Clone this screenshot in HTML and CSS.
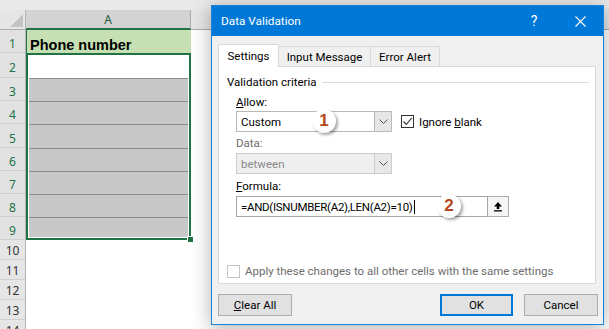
FILE: index.html
```html
<!DOCTYPE html>
<html>
<head>
<meta charset="utf-8">
<title>Data Validation</title>
<link rel="stylesheet" href="styles.css">
</head>
<body>
<div class="sheet">
  <div class="topstrip"></div>
  <div class="grid">
    <div class="rowheads">
      <div class="corner"><svg width="13" height="13" viewBox="0 0 13 13"><polygon points="13,0 13,13 0,13" fill="#c3c3c3"/></svg></div>
      <div class="rh sel r1">1</div>
      <div class="rh sel r2">2</div>
      <div class="rh sel">3</div>
      <div class="rh sel">4</div>
      <div class="rh sel r5">5</div>
      <div class="rh sel">6</div>
      <div class="rh sel">7</div>
      <div class="rh sel">8</div>
      <div class="rh sel">9</div>
      <div class="rh low">10</div>
      <div class="rh low">11</div>
      <div class="rh low">12</div>
      <div class="rh low">13</div>
      <div class="rh low">14</div>
    </div>
    <div class="colA">
      <div class="colhead">A</div>
      <div class="a1">Phone number</div>
      <div class="selection">
        <div class="cell active"></div>
        <div class="cell grey"></div>
        <div class="cell grey"></div>
        <div class="cell grey tall"></div>
        <div class="cell grey"></div>
        <div class="cell grey"></div>
        <div class="cell grey"></div>
        <div class="cell grey last"></div>
        <span class="handle"></span>
      </div>
    </div>
    <div class="colrest"><div class="resthead"></div></div>
  </div>
</div>

<div class="dialog">
  <div class="titlebar">
    <span class="title">Data Validation</span>
    <span class="tbtn help">?</span>
    <span class="tbtn close"><svg width="11" height="11" viewBox="0 0 11 11"><path d="M0.5 0.5 L10.5 10.5 M10.5 0.5 L0.5 10.5" stroke="#fff" stroke-width="1.1" fill="none"/></svg></span>
  </div>
  <div class="dbody">
    <div class="tabs">
      <div class="tab active w1">Settings</div>
      <div class="tab w2">Input Message</div>
      <div class="tab w3">Error Alert</div>
    </div>
    <div class="panel">
      <div class="legend"><span>Validation criteria</span></div>
      <div class="fields">
        <div class="label"><u>A</u>llow:</div>
        <div class="line">
          <div class="select">
            <span class="val">Custom</span>
            <span class="arrow"><svg width="9" height="6" viewBox="0 0 9 6"><path d="M0.5 0.5 L4.5 4.5 L8.5 0.5" stroke="#555" stroke-width="1" fill="none"/></svg></span>
          </div>
          <span class="badge b1">1</span>
          <label class="check">
            <span class="box"><svg width="11" height="11" viewBox="0 0 11 11"><path d="M1.5 5.5 L4.3 8.5 L9.8 1.8" stroke="#333" stroke-width="1.1" fill="none"/></svg></span>
            <span>Ignore <u>b</u>lank</span>
          </label>
        </div>
        <div class="label dim">Data:</div>
        <div class="line">
          <div class="select disabled">
            <span class="val">between</span>
            <span class="arrow"><svg width="9" height="6" viewBox="0 0 9 6"><path d="M0.5 0.5 L4.5 4.5 L8.5 0.5" stroke="#555" stroke-width="1" fill="none"/></svg></span>
          </div>
        </div>
        <div class="label"><u>F</u>ormula:</div>
        <div class="line">
          <div class="input"><span class="val">=AND(ISNUMBER(A2),LEN(A2)=10)</span><span class="caret"></span></div>
          <span class="upbtn"><svg width="10" height="11" viewBox="0 0 10 11"><path d="M5 1 L9 5.5 L6.3 5.5 L6.3 8 L3.7 8 L3.7 5.5 L1 5.5 Z" fill="#000"/><rect x="1" y="9.2" width="8" height="1.3" fill="#000"/></svg></span>
          <span class="badge b2">2</span>
        </div>
      </div>
      <div class="apply">
        <span class="box dimbox"></span>
        <span>Apply these changes to all other cells with the same settings</span>
      </div>
    </div>
    <div class="buttons">
      <button class="btn"><u>C</u>lear All</button>
      <div class="right">
        <button class="btn ok">OK</button>
        <button class="btn">Cancel</button>
      </div>
    </div>
  </div>
</div>
</body>
</html>
```

FILE: styles.css
```css
* { box-sizing: border-box; }
html, body { margin: 0; padding: 0; }
body {
  width: 609px;
  height: 329px;
  overflow: hidden;
  background: #fff;
  font-family: Roboto, "Noto Sans", sans-serif;
  position: relative;
}

/* ---------- spreadsheet ---------- */
.sheet { width: 609px; height: 329px; display: flex; flex-direction: column; overflow: hidden; }
.sheet * { flex-shrink: 0; }
.topstrip { height: 10px; background: #e9e9e9; }
.grid { display: flex; height: 319px; overflow: hidden; }

.rowheads { width: 26px; display: flex; flex-direction: column; background: #e6e6e6; border-right: 1px solid #b5b5b5; }
.corner { height: 20px; display: flex; align-items: flex-end; justify-content: flex-end; padding: 0 2px 2px 0; border-bottom: 1px solid #ababab; background: #e6e6e6; }
.rh {
  height: 23px;
  display: flex; align-items: center; justify-content: center;
  font-family: "Noto Sans", sans-serif;
  font-size: 12px;
  color: #217346;
  border-bottom: 1px solid #cfcfcf;
  background: #e1e1e1;
  padding-top: 5px;
}
.rh.r1 { height: 23px; }
.rh.r2 { height: 25px; }
.rh.r5 { height: 24px; }
.rh.low { height: 20px; color: #333; background: #e6e6e6; padding-top: 2px; }

.colA { width: 165px; display: flex; flex-direction: column; }
.colhead {
  height: 20px;
  background: #d3d3d3;
  border-bottom: 2px solid #217346;
  border-right: 1px solid #ababab;
  display: flex; align-items: center; justify-content: center;
  font-family: "Noto Sans", sans-serif;
  font-size: 12px; color: #1d5c36;
}
.a1 {
  height: 23px;
  background: #c6e0b4;
  font-family: "Liberation Sans", Arial, sans-serif;
  font-weight: bold;
  font-size: 14.5px;
  display: flex; align-items: center;
  padding-left: 3px;
  padding-top: 6px;
  border-left: 1px solid #217346;
}
.selection {
  position: relative;
  height: 187px;
  border: 2px solid #217346;
  padding: 0 1px 1px 1px;
  display: flex; flex-direction: column;
  background: #fff;
}
.cell { height: 23px; }
.cell.active { background: #fff; }
.cell.grey { background: #c8c8c8; border-top: 1px solid #8c8c8c; }
.cell.tall { height: 24px; }
.cell.last { flex: 1 1 auto; }
.handle {
  position: absolute;
  right: -5px; bottom: -5px;
  width: 7px; height: 7px;
  background: #217346;
  border: 1px solid #fff;
}

.colrest { flex: 1 1 auto; display: flex; flex-direction: column; }
.resthead { height: 20px; background: #e6e6e6; border-bottom: 1px solid #ababab; }

/* ---------- dialog ---------- */
.dialog {
  position: absolute;
  left: 211px; top: 5px;
  width: 393px; height: 320px;
  border: 1px solid #1883d7;
  background: #f0f0f0;
  box-shadow: 0 3px 18px rgba(0,0,0,0.32);
  font-family: Roboto, "Noto Sans", sans-serif;
  font-size: 11.5px;
  color: #000;
  display: flex; flex-direction: column;
}
.titlebar {
  height: 30px;
  background: #0078d7;
  color: #fff;
  display: flex; align-items: center;
  padding-left: 9px;
}
.title { flex: 1; font-size: 11.8px; }
.tbtn { width: 46px; height: 30px; display: flex; align-items: center; justify-content: center; font-size: 15px; }
.tbtn.help { font-size: 14px; }

.dbody { padding: 8px 5px 0 6px; display: flex; flex-direction: column; }
.tabs { display: flex; height: 22px; }
.tab {
  margin-top: 2px;
  height: 20px;
  border: 1px solid #d9d9d9;
  border-bottom: none;
  border-left: none;
  background: #f0f0f0;
  display: flex; align-items: center; justify-content: center;
  padding-top: 1px;
}
.tab.w1 { width: 61px; }
.tab.w2 { width: 92px; }
.tab.w3 { width: 69px; }
.tab.active {
  margin-top: 0;
  height: 23px;
  background: #fff;
  border-left: 1px solid #d9d9d9;
  position: relative;
  z-index: 1;
  padding-top: 0;
}

.panel {
  width: 378px;
  height: 218px;
  background: #fff;
  border: 1px solid #d9d9d9;
  padding: 0 6px 0 8px;
}
.legend { margin-top: 7px; height: 16px; display: flex; align-items: center; }
.legend::after { content: ""; flex: 1; height: 1px; background: #dcdcdc; margin-left: 5px; }

.fields { padding-left: 9px; }
.label { height: 16px; margin-top: 4px; line-height: 16px; }
.label.dim { color: #6d6d6d; margin-top: 2px; }
.label + .line { margin-top: 2px; }
.fields .label:nth-of-type(3) { margin-top: 3px; }
.line { position: relative; display: flex; align-items: center; height: 21px; }
.fields .line:nth-of-type(2) { margin-top: 1px; }

.select {
  width: 156px; height: 21px;
  border: 1px solid #b9b9b9;
  background: #fff;
  display: flex; align-items: stretch;
}
.select .val { flex: 1; padding-left: 4px; display: flex; align-items: center; }
.select .arrow {
  width: 17px;
  background: #e6e6e6;
  border-left: 1px solid #b9b9b9;
  display: flex; align-items: center; justify-content: center;
}
.select.disabled { background: #efefef; border-color: #cccccc; color: #8a8a8a; }
.select.disabled .arrow { background: #e8e8e8; border-left-color: #cccccc; }

.check { display: flex; align-items: center; margin-left: 9px; gap: 5px; }
.box {
  width: 13px; height: 13px;
  border: 1px solid #333;
  background: #fff;
  display: flex; align-items: center; justify-content: center;
}
.box svg { display: block; }

.input {
  width: 252px; height: 21px;
  border: 1px solid #a6a6a6;
  background: #fff;
  display: flex; align-items: center;
  padding-left: 4px;
  letter-spacing: -0.3px;
}
.caret { width: 1px; height: 14px; background: #000; margin-left: 1px; }
.upbtn {
  width: 21px; height: 21px;
  border: 1px solid #adadad;
  border-left: none;
  background: #f5f5f5;
  display: flex; align-items: center; justify-content: center;
}

.badge {
  position: absolute;
  width: 24px; height: 24px;
  border-radius: 50%;
  background: #fff;
  box-shadow: 2px 2px 3px rgba(0,0,0,0.35);
  color: #b5461c;
  font-family: "Liberation Sans", Arial, sans-serif;
  font-weight: bold;
  font-size: 17px;
  display: flex; align-items: center; justify-content: center;
  top: -2px;
}
.badge.b1 { left: 76px; }
.badge.b2 { left: 201px; }

.apply { margin-top: 47px; display: flex; align-items: center; gap: 5px; color: #6d6d6d; height: 14px; }
.box.dimbox { border-color: #c4c4c4; }

.buttons { margin-top: 10px; display: flex; justify-content: space-between; }
.right { display: flex; gap: 11px; }
.btn {
  width: 74px; height: 22px;
  border: 1px solid #adadad;
  background: #e1e1e1;
  font-family: Roboto, "Noto Sans", sans-serif;
  font-size: 11.5px;
  color: #000;
  padding: 0;
  display: flex; align-items: center; justify-content: center;
}
.btn.ok { width: 73px; border: 2px solid #0078d7; }
```
